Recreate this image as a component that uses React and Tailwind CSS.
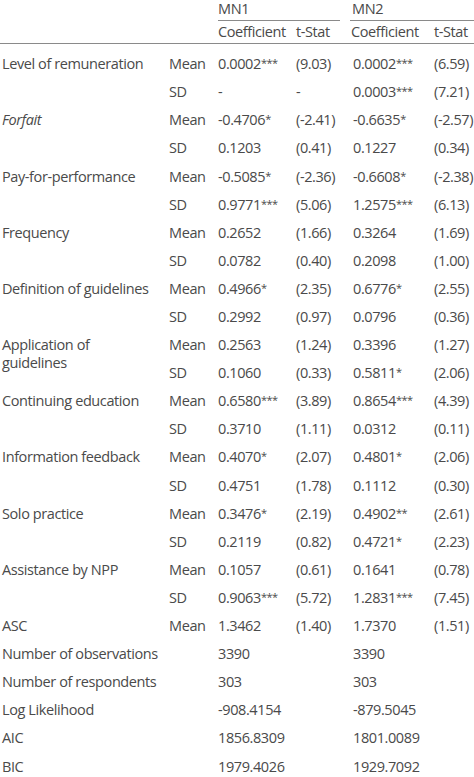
import React from 'react';

const rows = [
  { label: 'Level of remuneration', stat: 'Mean', c1: '0.0002***', t1: '(9.03)', c2: '0.0002***', t2: '(6.59)' },
  { stat: 'SD', c1: '-', t1: '-', c2: '0.0003***', t2: '(7.21)' },
  { label: 'Forfait', italic: true, stat: 'Mean', c1: '-0.4706*', t1: '(-2.41)', c2: '-0.6635*', t2: '(-2.57)' },
  { stat: 'SD', c1: '0.1203', t1: '(0.41)', c2: '0.1227', t2: '(0.34)' },
  { label: 'Pay-for-performance', stat: 'Mean', c1: '-0.5085*', t1: '(-2.36)', c2: '-0.6608*', t2: '(-2.38)' },
  { stat: 'SD', c1: '0.9771***', t1: '(5.06)', c2: '1.2575***', t2: '(6.13)' },
  { label: 'Frequency', stat: 'Mean', c1: '0.2652', t1: '(1.66)', c2: '0.3264', t2: '(1.69)' },
  { stat: 'SD', c1: '0.0782', t1: '(0.40)', c2: '0.2098', t2: '(1.00)' },
  { label: 'Definition of guidelines', stat: 'Mean', c1: '0.4966*', t1: '(2.35)', c2: '0.6776*', t2: '(2.55)' },
  { stat: 'SD', c1: '0.2992', t1: '(0.97)', c2: '0.0796', t2: '(0.36)' },
  { label: 'Application of', stat: 'Mean', c1: '0.2563', t1: '(1.24)', c2: '0.3396', t2: '(1.27)' },
  { label: 'guidelines', stat: 'SD', c1: '0.1060', t1: '(0.33)', c2: '0.5811*', t2: '(2.06)', tight: true },
  { label: 'Continuing education', stat: 'Mean', c1: '0.6580***', t1: '(3.89)', c2: '0.8654***', t2: '(4.39)' },
  { stat: 'SD', c1: '0.3710', t1: '(1.11)', c2: '0.0312', t2: '(0.11)' },
  { label: 'Information feedback', stat: 'Mean', c1: '0.4070*', t1: '(2.07)', c2: '0.4801*', t2: '(2.06)' },
  { stat: 'SD', c1: '0.4751', t1: '(1.78)', c2: '0.1112', t2: '(0.30)' },
  { label: 'Solo practice', stat: 'Mean', c1: '0.3476*', t1: '(2.19)', c2: '0.4902**', t2: '(2.61)' },
  { stat: 'SD', c1: '0.2119', t1: '(0.82)', c2: '0.4721*', t2: '(2.23)' },
  { label: 'Assistance by NPP', stat: 'Mean', c1: '0.1057', t1: '(0.61)', c2: '0.1641', t2: '(0.78)' },
  { stat: 'SD', c1: '0.9063***', t1: '(5.72)', c2: '1.2831***', t2: '(7.45)' },
  { label: 'ASC', stat: 'Mean', c1: '1.3462', t1: '(1.40)', c2: '1.7370', t2: '(1.51)' },
  { label: 'Number of observations', c1: '3390', c2: '3390' },
  { label: 'Number of respondents', c1: '303', c2: '303' },
  { label: 'Log Likelihood', c1: '-908.4154', c2: '-879.5045' },
  { label: 'AIC', c1: '1856.8309', c2: '1801.0089' },
  { label: 'BIC', c1: '1979.4026', c2: '1929.7092' },
];

// asterisks in the source font are small and raised
const Coef = ({ v }) => {
  if (!v) return null;
  const m = v.match(/^([^*]*)(\**)$/);
  return (
    <>
      {m[1]}
      {m[2] && <span className="text-[11px] tracking-[-0.5px] align-[2px]">{m[2]}</span>}
    </>
  );
};

const App = () => {
  return (
    <div
      className="w-[474px] h-[777px] bg-white overflow-hidden text-[#4a4a4a] text-[14.5px] font-normal tracking-[-0.4px]"
      style={{ fontFamily: '"Open Sans", "Liberation Sans", sans-serif' }}
    >
      <div className="grid grid-cols-[169px_49px_78px_54px_84px_40px] whitespace-nowrap">
        {/* header */}
        <div className="col-span-2 h-[21px]" />
        <div className="col-span-2 h-[21px] pr-[10px]">
          <div className="h-full border-b border-[#8a8a8a] leading-[18px]">MN1</div>
        </div>
        <div className="col-span-2 h-[21px]">
          <div className="h-full border-b border-[#8a8a8a] leading-[18px] pl-[2px]">MN2</div>
        </div>

        <div className="col-span-6 grid grid-cols-[169px_49px_78px_54px_84px_40px] h-[23px] border-b border-[#8a8a8a] items-center">
          <div />
          <div />
          <div>Coefficient</div>
          <div>t-Stat</div>
          <div className="pl-[1px]">Coefficient</div>
          <div>t-Stat</div>
        </div>

        <div className="col-span-6 pt-[6px]">
          {rows.map((r, i) => (
            <div
              key={i}
              className="grid grid-cols-[169px_49px_78px_54px_84px_40px] h-[28.1px] items-center"
            >
              <div className={`pl-[2px] ${r.italic ? 'italic' : ''} ${r.tight ? '-mt-[20px]' : ''}`}>{r.label}</div>
              <div>{r.stat}</div>
              <div><Coef v={r.c1} /></div>
              <div>{r.t1}</div>
              <div className="pl-[3px]"><Coef v={r.c2} /></div>
              <div>{r.t2}</div>
            </div>
          ))}
        </div>
      </div>
    </div>
  );
};

export default App;
